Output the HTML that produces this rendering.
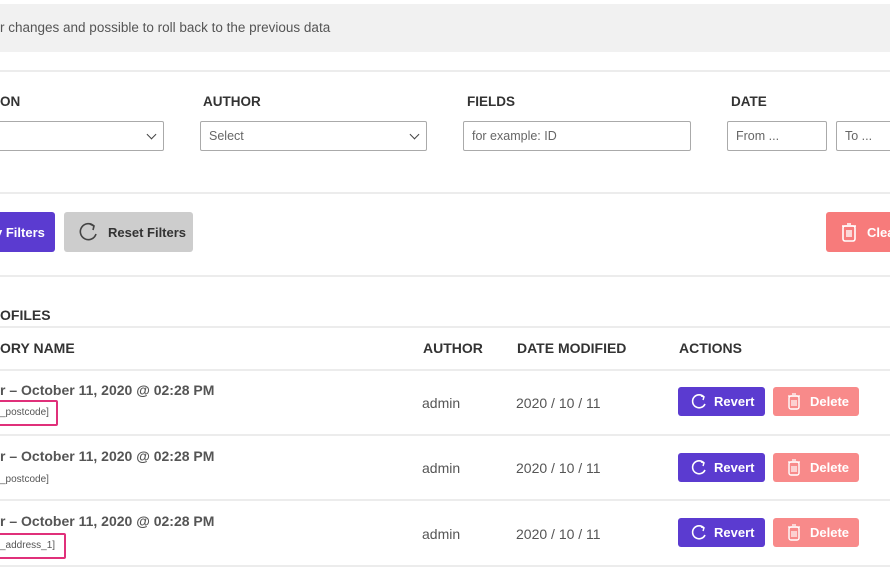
<!DOCTYPE html><html><head><style>
body{margin:0;width:890px;height:570px;overflow:hidden;background:#fff;font-family:"Liberation Sans",sans-serif;position:relative;color:#444}
.a{position:absolute}
.l{position:absolute;left:0;width:890px;height:2px;background:#ececec}
.lab{position:absolute;top:94px;font-weight:bold;font-size:13.5px;color:#333}
.in{position:absolute;top:121px;border:1px solid #aaa;border-radius:2px;font-size:12.5px;color:#666;line-height:28px;padding-left:8px;box-sizing:border-box;height:30px}
.chev{position:absolute;right:8px;top:9px;width:6px;height:6px;border-right:1.5px solid #444;border-bottom:1.5px solid #444;transform:rotate(45deg)}
.btn{position:absolute;border-radius:3px;color:#fff;font-weight:bold;font-size:13px;display:flex;align-items:center}
.rv{background:#5b3bd0;left:678px;width:87px;height:29px}
.dl{background:#f88a8a;left:773px;width:86px;height:29px}
.t{font-size:14px;color:#555;font-weight:bold}
.n{font-size:14px;color:#555}
.s{font-size:10px;color:#555}
.box{position:absolute;left:-4px;border:2px solid #e0307a;height:26px;width:62px;box-sizing:border-box;border-radius:2px}
</style></head><body>
<div class="a" style="left:0;top:4px;width:890px;height:48px;background:#f1f1f1"></div>
<div class="a" style="left:0;top:20px;font-size:13.5px;color:#555">r changes and possible to roll back to the previous data</div>
<div class="l" style="top:70px"></div>
<div class="lab" style="left:0">ON</div><div class="lab" style="left:203px">AUTHOR</div><div class="lab" style="left:467px">FIELDS</div><div class="lab" style="left:731px">DATE</div>
<div class="in" style="left:-5px;width:169px"><span class="chev"></span></div>
<div class="in" style="left:200px;width:227px">Select<span class="chev"></span></div>
<div class="in" style="left:463px;width:228px">for example: ID</div>
<div class="in" style="left:727px;width:100px">From ...</div>
<div class="in" style="left:836px;width:60px">To ...</div>
<div class="l" style="top:192px"></div>
<div class="btn" style="left:-5px;top:212px;width:60px;height:40px;background:#5b3bd0"><span>y Filters</span></div>
<div class="btn" style="left:64px;top:212px;width:129px;height:40px;background:#cdcdcd;color:#333"><svg width="22" height="22" style="margin:0 9px 0 13px" viewBox="0 0 22 22"><path d="M17 5A8 8 0 1 0 19 13" fill="none" stroke="#444" stroke-width="1.6"/><path d="M13 3l4 2-1 4" fill="none" stroke="#444" stroke-width="1.6"/></svg>Reset Filters</div>
<div class="btn" style="left:826px;top:212px;width:80px;height:40px;background:#f77b7b"><svg width="16" height="20" style="margin:0 10px 0 15px" viewBox="0 0 16 20"><rect x="2" y="4" width="12" height="15" rx="2" fill="none" stroke="#fff" stroke-width="1.6"/><path d="M1 4h14M6 2h4M6 8v7M8 8v7M10 8v7" stroke="#fff" stroke-width="1.4"/></svg>Clea</div>
<div class="l" style="top:275px"></div>
<div class="a t" style="left:0;top:307px;color:#333">OFILES</div>
<div class="l" style="top:326px"></div>
<div class="a t" style="left:0;top:340px;color:#333">ORY NAME</div>
<div class="a t" style="left:423px;top:340px;color:#333">AUTHOR</div>
<div class="a t" style="left:517px;top:340px;color:#333">DATE MODIFIED</div>
<div class="a t" style="left:679px;top:340px;color:#333">ACTIONS</div>
<div class="l" style="top:369px"></div>

<div class="a t" style="left:0;top:382px">r – October 11, 2020 @ 02:28 PM</div>
<div class="a s" style="left:0;top:407px">_postcode]</div><div class="box" style="top:400px"></div>
<div class="a n" style="left:422px;top:395px">admin</div>
<div class="a n" style="left:516px;top:395px">2020 / 10 / 11</div>
<div class="btn rv" style="top:387px"><svg width="18" height="18" style="margin:0 6px 0 12px" viewBox="0 0 18 18"><path d="M14 4A6.5 6.5 0 1 0 15 11" fill="none" stroke="#fff" stroke-width="1.6"/><path d="M11 3l3 1-1 3" fill="none" stroke="#fff" stroke-width="1.4"/></svg>Revert</div>
<div class="btn dl" style="top:387px"><svg width="14" height="17" style="margin:0 9px 0 14px" viewBox="0 0 14 17"><rect x="2" y="3" width="10" height="13" rx="2" fill="none" stroke="#fff" stroke-width="1.4"/><path d="M1 3h12M5 1h4M5 7v6M7 7v6M9 7v6" stroke="#fff" stroke-width="1.2"/></svg>Delete</div>
<div class="l" style="top:434px"></div>

<div class="a t" style="left:0;top:448px">r – October 11, 2020 @ 02:28 PM</div>
<div class="a s" style="left:0;top:474px">_postcode]</div>
<div class="a n" style="left:422px;top:460px">admin</div>
<div class="a n" style="left:516px;top:460px">2020 / 10 / 11</div>
<div class="btn rv" style="top:453px"><svg width="18" height="18" style="margin:0 6px 0 12px" viewBox="0 0 18 18"><path d="M14 4A6.5 6.5 0 1 0 15 11" fill="none" stroke="#fff" stroke-width="1.6"/><path d="M11 3l3 1-1 3" fill="none" stroke="#fff" stroke-width="1.4"/></svg>Revert</div>
<div class="btn dl" style="top:453px"><svg width="14" height="17" style="margin:0 9px 0 14px" viewBox="0 0 14 17"><rect x="2" y="3" width="10" height="13" rx="2" fill="none" stroke="#fff" stroke-width="1.4"/><path d="M1 3h12M5 1h4M5 7v6M7 7v6M9 7v6" stroke="#fff" stroke-width="1.2"/></svg>Delete</div>
<div class="l" style="top:499px"></div>

<div class="a t" style="left:0;top:513px">r – October 11, 2020 @ 02:28 PM</div>
<div class="a s" style="left:0;top:540px">_address_1]</div><div class="box" style="top:533px;width:70px"></div>
<div class="a n" style="left:422px;top:526px">admin</div>
<div class="a n" style="left:516px;top:526px">2020 / 10 / 11</div>
<div class="btn rv" style="top:518px"><svg width="18" height="18" style="margin:0 6px 0 12px" viewBox="0 0 18 18"><path d="M14 4A6.5 6.5 0 1 0 15 11" fill="none" stroke="#fff" stroke-width="1.6"/><path d="M11 3l3 1-1 3" fill="none" stroke="#fff" stroke-width="1.4"/></svg>Revert</div>
<div class="btn dl" style="top:518px"><svg width="14" height="17" style="margin:0 9px 0 14px" viewBox="0 0 14 17"><rect x="2" y="3" width="10" height="13" rx="2" fill="none" stroke="#fff" stroke-width="1.4"/><path d="M1 3h12M5 1h4M5 7v6M7 7v6M9 7v6" stroke="#fff" stroke-width="1.2"/></svg>Delete</div>
<div class="l" style="top:565px"></div>
</body></html>
